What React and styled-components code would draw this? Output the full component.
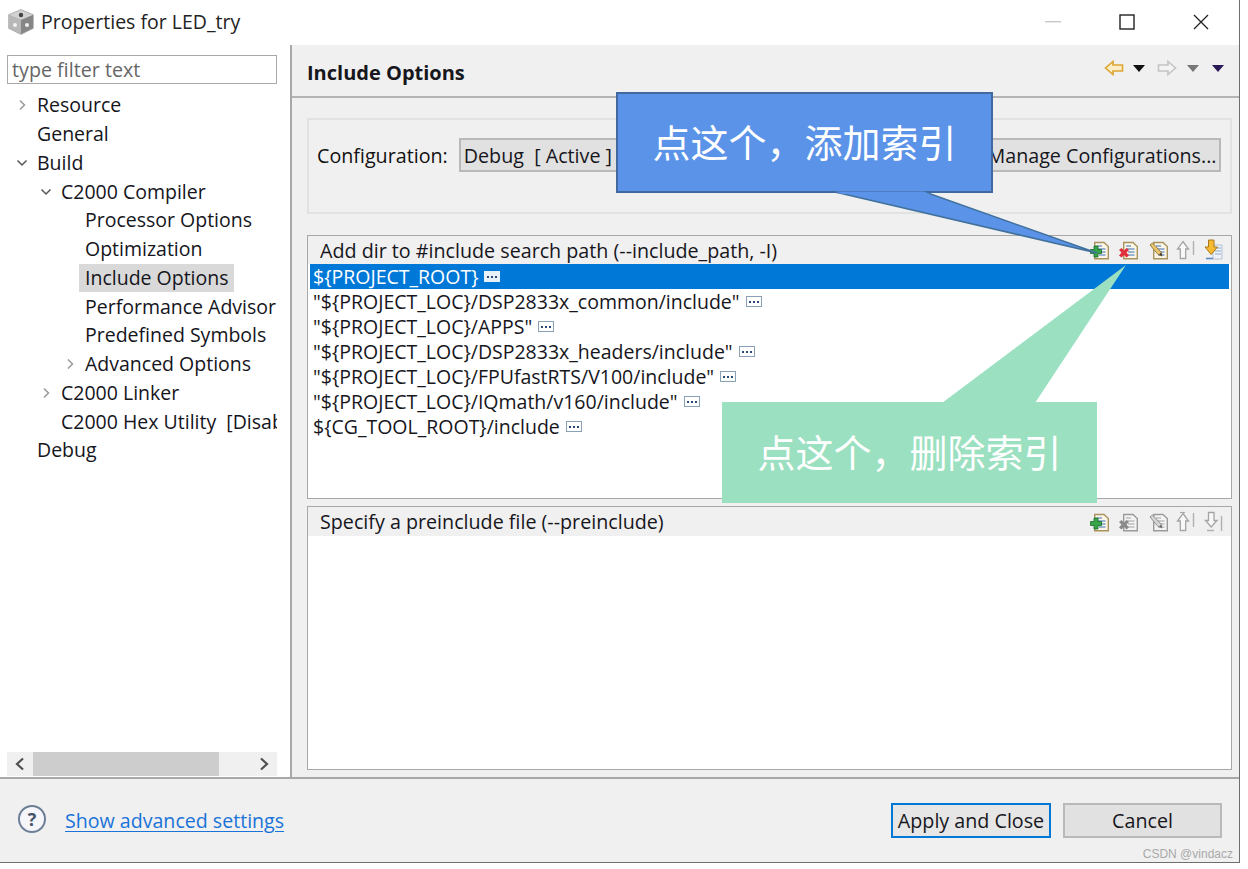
import React from "react";
import styled, { createGlobalStyle } from "styled-components";

const Global = createGlobalStyle`
  html, body { margin: 0; padding: 0; background: #fff; }
  body { font-family: "Open Sans", "Noto Sans", "Noto Sans CJK SC", sans-serif; color: #111; }
  * { box-sizing: border-box; }
`;

const Window = styled.div`
  position: relative;
  width: 1240px;
  height: 863px;
  border-right: 1px solid #6e6e6e;
  border-bottom: 1px solid #6e6e6e;
  background: #fff;
  font-size: 19.7px;
  display: flex;
  flex-direction: column;
  overflow: hidden;
`;
const TitleBar = styled.div`
  height: 45px;
  flex: none;
  display: flex;
  align-items: center;
  padding: 0 1px 2px 8px;
  gap: 7px;
`;
const Title = styled.div`
  flex: 1;
  font-size: 19.5px;
  color: #222;
`;
const WinButtons = styled.div`
  display: flex;
  align-items: center;
`;
const WinButton = styled.div`
  width: 74px;
  height: 44px;
  display: flex;
  align-items: center;
  justify-content: center;
`;
const Body = styled.div`
  flex: 1;
  display: flex;
  min-height: 0;
`;
const Left = styled.div`
  width: 290px;
  flex: none;
  display: flex;
  flex-direction: column;
  padding: 10px 13px 1px 7px;
`;
const Filter = styled.div`
  height: 29px;
  flex: none;
  border: 1px solid #a9a9a9;
  padding-left: 4px;
  line-height: 27px;
  color: #666;
`;
const Tree = styled.div`
  flex: 1;
  padding-top: 7px;
  overflow: hidden;
  min-height: 0;
  font-size: 19.5px;
`;
const Row = styled.div`
  height: 28.75px;
  display: flex;
  align-items: center;
  white-space: pre;
  padding-left: ${(p) => 6 + p.$level * 24}px;
`;
const Twist = styled.span`
  width: 18px;
  height: 14px;
  flex: none;
  margin-right: 6px;
  display: flex;
  align-items: center;
  justify-content: center;
`;
const RowLabel = styled.span`
  padding: 0 5px 0 0;
  margin-left: ${(p) => (p.$selected ? "-6px" : "0")};
  padding-left: ${(p) => (p.$selected ? "6px" : "0")};
  background: ${(p) => (p.$selected ? "#d9d9d9" : "transparent")};
  line-height: 28px;
  height: 28px;
  color: #15151c;
`;
const HScroll = styled.div`
  height: 24px;
  flex: none;
  background: #f0f0f0;
  display: flex;
  align-items: center;
`;
const ScrollEnd = styled.div`
  width: 26px;
  flex: none;
  height: 24px;
  display: flex;
  align-items: center;
  justify-content: center;
`;
const Thumb = styled.div`
  width: 186px;
  height: 24px;
  background: #cdcdcd;
  flex: none;
`;
const ScrollGap = styled.div`
  flex: 1;
`;
const Right = styled.div`
  flex: 1;
  min-width: 0;
  background: #f0f0f0;
  border-left: 2px solid #a8a8a8;
  display: flex;
  flex-direction: column;
`;
const Header = styled.div`
  height: 53px;
  flex: none;
  border-bottom: 2px solid #b4b4b4;
  display: flex;
  align-items: center;
  padding: 3px 15px 0 15px;
`;
const HeaderTitle = styled.div`
  flex: 1;
  font-weight: 700;
  font-size: 20px;
  color: #16161c;
`;
const Nav = styled.div`
  display: flex;
  align-items: center;
  margin-top: -8px;
`;
const Content = styled.div`
  flex: 1;
  display: flex;
  flex-direction: column;
  padding: 20px 7px 7px 15px;
  min-height: 0;
`;
const ConfigGroup = styled.div`
  height: 96px;
  flex: none;
  border: 2px solid #e2e2e2;
  display: flex;
  align-items: flex-start;
  padding: 18px 9px 0 8px;
  gap: 11px;
`;
const ConfigLabel = styled.div`
  line-height: 34px;
  padding-top: 1px;
`;
const Select = styled.div`
  height: 34px;
  flex: 1;
  border: 2px solid #b9b9b9;
  background: #e1e1e1;
  line-height: 31px;
  padding-left: 3px;
  color: #16161c;
  white-space: pre;
`;
const ManageButton = styled.div`
  height: 34px;
  width: 238px;
  margin-left: 16px;
  border: 2px solid #b9b9b9;
  background: #e1e1e1;
  line-height: 31px;
  text-align: center;
  white-space: nowrap;
  color: #16161c;
`;
const ListPanel = styled.div`
  flex: ${(p) => (p.$grow ? "1" : "none")};
  height: ${(p) => p.$height}px;
  margin-top: ${(p) => p.$top}px;
  border: 1px solid #a8a8a8;
  background: #fff;
  display: flex;
  flex-direction: column;
  padding: 0 1px;
`;
const ListHeader = styled.div`
  height: ${(p) => p.$height}px;
  flex: none;
  background: #f0f0f0;
  margin: 0 -1px;
  display: flex;
  align-items: center;
  padding: 0 2.5px 0 12px;
`;
const ListTitle = styled.div`
  flex: 1;
  white-space: nowrap;
  color: #16161c;
`;
const Tools = styled.div`
  display: flex;
  align-items: center;
`;
const Tool = styled.div`
  width: ${(p) => p.$w || 29}px;
  height: 26px;
  display: flex;
  align-items: center;
  justify-content: center;
`;
const Item = styled.div`
  height: 25px;
  display: flex;
  align-items: center;
  gap: 6px;
  padding-left: 3px;
  white-space: pre;
  line-height: 25px;
  font-size: 19.5px;
  margin: 0 1px;
  background: ${(p) => (p.$selected ? "#0078d7" : "transparent")};
  color: ${(p) => (p.$selected ? "#fff" : "#16161c")};
`;
const Dots = styled.span`
  width: 16px;
  height: 11px;
  flex: none;
  background: ${(p) => (p.$selected ? "#e8f0f8" : "#fff")};
  border: 1px solid ${(p) => (p.$selected ? "#e8f0f8" : "#8aa0b5")};
  display: flex;
  align-items: center;
  justify-content: center;
  gap: 2px;
  & > i {
    width: 2px;
    height: 2px;
    background: #2a4a78;
    display: block;
  }
`;
const Footer = styled.div`
  height: 85px;
  flex: none;
  background: #f0f0f0;
  border-top: 2px solid #a8a8a8;
  display: flex;
  align-items: center;
  padding: 0 17px 0 18px;
`;
const Help = styled.div`
  width: 28px;
  height: 28px;
  border-radius: 50%;
  border: 2px solid #6d7f96;
  background: #f6f6fa;
  display: flex;
  align-items: center;
  justify-content: center;
  font-weight: 700;
  font-size: 18px;
  color: #47536b;
  margin-top: -4px;
`;
const Link = styled.a`
  margin-left: 19px;
  flex: 1;
  color: #1a73d8;
  text-decoration: underline;
  text-underline-offset: 3px;
  font-size: 19.6px;
`;
const Btn = styled.div`
  width: ${(p) => p.$width}px;
  height: 35px;
  margin-left: ${(p) => p.$gap || 0}px;
  line-height: 31px;
  text-align: center;
  white-space: nowrap;
  background: ${(p) => (p.$primary ? "#e6e6e6" : "#e1e1e1")};
  border: 2px solid ${(p) => (p.$primary ? "#0078d7" : "#b9b9b9")};
  color: #16161c;
`;
const Watermark = styled.div`
  position: absolute;
  right: 6px;
  bottom: 1px;
  font-family: "Liberation Sans", sans-serif;
  font-size: 12px;
  color: #a9a9a9;
`;
const Callout = styled.div`
  position: absolute;
  left: ${(p) => p.$x}px;
  top: ${(p) => p.$y}px;
  width: ${(p) => p.$w}px;
  height: ${(p) => p.$h}px;
  background: ${(p) => p.$fill};
  border: ${(p) => (p.$edge ? `2px solid ${p.$edge}` : "none")};
  display: flex;
  align-items: center;
  justify-content: center;
  color: #fff;
  font-family: "Noto Sans CJK SC", sans-serif;
  font-size: 38px;
  padding-bottom: 4px;
`;
const TailLayer = styled.svg`
  position: absolute;
  left: 0;
  top: 0;
  width: 1240px;
  height: 863px;
  pointer-events: none;
`;

const CubeIcon = () => (
  <svg width="26" height="26" viewBox="0 0 26 26">
    <path d="M13 1 L25 6 V19 L13 25 L1 19 V6Z" fill="#9a9a9a" stroke="#aaa" strokeWidth="1.5" strokeLinejoin="round" />
    <path d="M13 1 L25 6 L13 11 L1 6Z" fill="#d2d2d2" />
    <path d="M1 6 L13 11 V25 L1 19Z" fill="#b8b8b8" />
    <path d="M25 6 L13 11 V25 L25 19Z" fill="#868686" />
    <circle cx="13" cy="6" r="2.2" fill="#444" />
    <circle cx="7" cy="16" r="2" fill="#f2f2f2" />
    <circle cx="19" cy="16" r="2" fill="#eee" />
  </svg>
);
const Chevron = ({ open, color = "#555" }) => (
  <svg width="12" height="12" viewBox="0 0 12 12">
    <path d={open ? "M1.5 3.5 L6 8 L10.5 3.5" : "M4 1.5 L8.5 6 L4 10.5"} fill="none" stroke={color} strokeWidth="1.5" />
  </svg>
);
const ScrollArrow = ({ right }) => (
  <svg width="12" height="14" viewBox="0 0 12 14">
    <path d={right ? "M3 1.5 L9 7 L3 12.5" : "M9 1.5 L3 7 L9 12.5"} fill="none" stroke="#505050" strokeWidth="2.2" />
  </svg>
);
const Doc = ({ off, x = 5 }) => (
  <g transform={`translate(${x} 0)`}>
    <path d="M0.7 3.5 H10 L14.3 7.5 V19.8 H0.7Z" fill={off ? "#f4f4f4" : "#fbf6e8"} stroke={off ? "#9a9a9a" : "#a8935c"} strokeWidth="1.4" />
    <path d="M3 7 H8 M3 10 H11.5 M5 13 H11.5 M5 16 H11.5" stroke={off ? "#bcbcbc" : "#7a9dcb"} strokeWidth="1.3" />
  </g>
);
const AddIcon = () => (
  <svg width="22" height="22" viewBox="0 0 22 22">
    <Doc />
    <path d="M5 7 H9 V10.5 H12.5 V14.5 H9 V18 H5 V14.5 H1.5 V10.5 H5Z" fill="#35a548" stroke="#1c6a2c" strokeWidth="0.8" />
  </svg>
);
const DeleteIcon = ({ off }) => (
  <svg width="22" height="22" viewBox="0 0 22 22">
    <Doc off={off} />
    <path d="M1 11 L3.5 9 L6 11.5 L8.5 9 L11 11 L8.5 13.5 L11 16.5 L8.5 18.5 L6 16 L3.5 18.5 L1 16.5 L3.5 13.5Z" fill={off ? "#8a8a8a" : "#e0303c"} />
  </svg>
);
const EditIcon = ({ off }) => (
  <svg width="22" height="22" viewBox="0 0 22 22">
    <Doc off={off} x={6} />
    <path d="M3 6 L5.5 4 L14 13 L15 17 L11 15.5Z" fill={off ? "#d4d4d4" : "#e8c468"} stroke={off ? "#8a8a8a" : "#8a7040"} strokeWidth="0.9" />
    <path d="M12 15.5 L15 17 L14.2 13.8Z" fill={off ? "#666" : "#333"} />
  </svg>
);
const UpIcon = ({ on }) => (
  <svg width="22" height="22" viewBox="0 0 22 22">
    <path d="M8 2.5 L13.5 10 H10.7 V19.5 H5.3 V10 H2.5Z" fill="#f8f8f8" stroke="#a4a4a4" strokeWidth="1.3" />
    <path d="M18.5 2 V16" stroke="#b0b0b0" strokeWidth="1.4" />
    {!on && <path d="M5 1.5 H10" stroke="#a8a8a8" strokeWidth="1.2" />}
  </svg>
);
const DownIcon = ({ on }) => (
  <svg width="22" height="22" viewBox="0 0 22 22">
    {on ? (
      <>
        <path d="M10 6 H19 V20 H10Z" fill="#eef2f8" stroke="#b4c2d4" strokeWidth="1" />
        <path d="M12 9 H18 M12 12 H18 M12 15 H18" stroke="#8fa8c8" strokeWidth="1" />
        <path d="M5.5 1 H11 V8 H14.5 L8.2 15.5 L2 8 H5.5Z" fill="#f6bb30" stroke="#a87818" strokeWidth="1" />
        <path d="M3 19.5 H10" stroke="#5a8ac0" strokeWidth="1.6" />
      </>
    ) : (
      <>
        <path d="M5.5 1.5 H11 V9.5 H14 L8.2 16 L2.5 9.5 H5.5Z" fill="#f8f8f8" stroke="#a4a4a4" strokeWidth="1.3" />
        <path d="M18.5 5 V20 M4 19.5 H11" stroke="#b0b0b0" strokeWidth="1.4" />
      </>
    )}
  </svg>
);
const NavArrow = ({ right }) => (
  <svg width="20" height="16" viewBox="0 0 20 16" style={{ transform: right ? "scaleX(-1)" : "none" }}>
    <path
      d="M1.5 8 L9 1.5 V5 H18.5 V11 H9 V14.5Z"
      fill={right ? "#f4f4f4" : "#fbeec6"}
      stroke={right ? "#c4c4c4" : "#dca52f"}
      strokeWidth="1.6"
    />
  </svg>
);
const Tri = ({ color, gap }) => (
  <svg width="12" height="7" viewBox="0 0 12 7" style={{ marginLeft: gap }}>
    <path d="M0 0 H12 L6 7Z" fill={color} />
  </svg>
);

const tree = [
  { l: 0, t: "Resource", c: "closed", faint: true },
  { l: 0, t: "General" },
  { l: 0, t: "Build", c: "open" },
  { l: 1, t: "C2000 Compiler", c: "open" },
  { l: 2, t: "Processor Options" },
  { l: 2, t: "Optimization" },
  { l: 2, t: "Include Options", s: true },
  { l: 2, t: "Performance Advisor" },
  { l: 2, t: "Predefined Symbols" },
  { l: 2, t: "Advanced Options", c: "closed", faint: true },
  { l: 1, t: "C2000 Linker", c: "closed", faint: true },
  { l: 1, t: "C2000 Hex Utility  [Disabled]" },
  { l: 0, t: "Debug" },
];
const includes = [
  "${PROJECT_ROOT}",
  '"${PROJECT_LOC}/DSP2833x_common/include"',
  '"${PROJECT_LOC}/APPS"',
  '"${PROJECT_LOC}/DSP2833x_headers/include"',
  '"${PROJECT_LOC}/FPUfastRTS/V100/include"',
  '"${PROJECT_LOC}/IQmath/v160/include"',
  "${CG_TOOL_ROOT}/include",
];

const ToolSet = ({ off }) => (
  <Tools>
    <Tool><AddIcon /></Tool>
    <Tool><DeleteIcon off={off} /></Tool>
    <Tool $w={28}><EditIcon off={off} /></Tool>
    <Tool $w={28}><UpIcon on={!off} /></Tool>
    <Tool><DownIcon on={!off} /></Tool>
  </Tools>
);

export default function App() {
  return (
    <>
      <Global />
      <Window>
        <TitleBar>
          <CubeIcon />
          <Title>Properties for LED_try</Title>
          <WinButtons>
            <WinButton>
              <svg width="16" height="2"><rect width="16" height="1.4" fill="#c8c8c8" /></svg>
            </WinButton>
            <WinButton>
              <svg width="16" height="16"><rect x="1" y="1" width="14" height="14" fill="none" stroke="#222" strokeWidth="1.4" /></svg>
            </WinButton>
            <WinButton>
              <svg width="16" height="16"><path d="M1 1 L15 15 M15 1 L1 15" stroke="#222" strokeWidth="1.3" /></svg>
            </WinButton>
          </WinButtons>
        </TitleBar>
        <Body>
          <Left>
            <Filter>type filter text</Filter>
            <Tree>
              {tree.map((r) => (
                <Row key={r.t} $level={r.l}>
                  <Twist>
                    {r.c && <Chevron open={r.c === "open"} color={r.faint ? "#999" : "#555"} />}
                  </Twist>
                  <RowLabel $selected={r.s}>{r.t}</RowLabel>
                </Row>
              ))}
            </Tree>
            <HScroll>
              <ScrollEnd><ScrollArrow /></ScrollEnd>
              <Thumb />
              <ScrollGap />
              <ScrollEnd><ScrollArrow right /></ScrollEnd>
            </HScroll>
          </Left>
          <Right>
            <Header>
              <HeaderTitle>Include Options</HeaderTitle>
              <Nav>
                <NavArrow />
                <Tri color="#111" gap="9px" />
                <Tri color="transparent" gap="0" />
                <NavArrow right />
                <Tri color="#777" gap="10px" />
                <Tri color="#2a1a55" gap="13px" />
              </Nav>
            </Header>
            <Content>
              <ConfigGroup>
                <ConfigLabel>Configuration:</ConfigLabel>
                <Select>Debug  [ Active ]</Select>
                <ManageButton>Manage Configurations...</ManageButton>
              </ConfigGroup>
              <ListPanel $height={264} $top={21}>
                <ListHeader $height={28}>
                  <ListTitle>Add dir to #include search path (--include_path, -I)</ListTitle>
                  <ToolSet />
                </ListHeader>
                {includes.map((t, i) => (
                  <Item key={t} $selected={i === 0}>
                    {t}
                    <Dots $selected={i === 0}><i /><i /><i /></Dots>
                  </Item>
                ))}
              </ListPanel>
              <ListPanel $grow $top={7}>
                <ListHeader $height={29}>
                  <ListTitle>Specify a preinclude file (--preinclude)</ListTitle>
                  <ToolSet off />
                </ListHeader>
              </ListPanel>
            </Content>
          </Right>
        </Body>
        <Footer>
          <Help>?</Help>
          <Link>Show advanced settings</Link>
          <Btn $primary $width={160}>Apply and Close</Btn>
          <Btn $width={159} $gap={12}>Cancel</Btn>
        </Footer>
        <Watermark>CSDN @vindacz</Watermark>
        <TailLayer viewBox="0 0 1240 863">
          <polygon points="835,192 925,192 1097,253" fill="#5b93e8" stroke="#41719c" strokeWidth="1.5" />
          <polygon points="942,403 1035,403 1126,265" fill="#9be0c0" />
        </TailLayer>
        <Callout $x={616} $y={92} $w={377} $h={101} $fill="#5b93e8" $edge="#41699f">点这个，添加索引</Callout>
        <Callout $x={722} $y={402} $w={375} $h={101} $fill="#9be0c0">点这个，删除索引</Callout>
        <TailLayer viewBox="0 0 1240 863">
          <polygon points="836,191.5 924,191.5 930,194 842,194" fill="#5b93e8" />
        </TailLayer>
      </Window>
    </>
  );
}
